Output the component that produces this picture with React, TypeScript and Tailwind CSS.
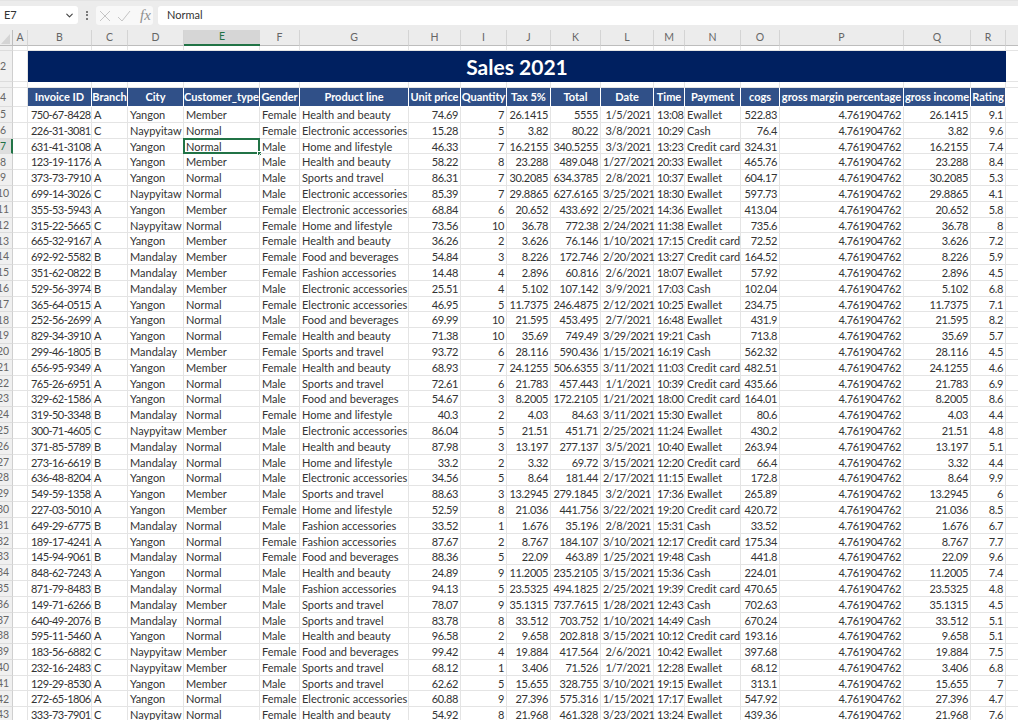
import { ChevronDown } from 'lucide-react';

const columns = [
  { key: 'A', width: 'w-[15px]' },
  { key: 'B', width: 'w-[64px]' },
  { key: 'C', width: 'w-[36px]' },
  { key: 'D', width: 'w-[56px]' },
  { key: 'E', width: 'w-[76px]' },
  { key: 'F', width: 'w-[40px]' },
  { key: 'G', width: 'w-[109px]' },
  { key: 'H', width: 'w-[52px]' },
  { key: 'I', width: 'w-[46px]' },
  { key: 'J', width: 'w-[44px]' },
  { key: 'K', width: 'w-[50px]' },
  { key: 'L', width: 'w-[53px]' },
  { key: 'M', width: 'w-[31px]' },
  { key: 'N', width: 'w-[56px]' },
  { key: 'O', width: 'w-[39px]' },
  { key: 'P', width: 'w-[124px]' },
  { key: 'Q', width: 'w-[67px]' },
  { key: 'R', width: 'w-[35px]' },
];

const headers = [
  'Invoice ID', 'Branch', 'City', 'Customer_type', 'Gender', 'Product line', 'Unit price', 'Quantity',
  'Tax 5%', 'Total', 'Date', 'Time', 'Payment', 'cogs', 'gross margin percentage', 'gross income', 'Rating',
];

// invoice|branch|city|type|gender|line|price|qty|tax|total|date|time|payment|cogs|income|rating
const raw = `750-67-8428|A|Yangon|Member|Female|Health and beauty|74.69|7|26.1415|5555|1/5/2021|13:08|Ewallet|522.83|26.1415|9.1
226-31-3081|C|Naypyitaw|Normal|Female|Electronic accessories|15.28|5|3.82|80.22|3/8/2021|10:29|Cash|76.4|3.82|9.6
631-41-3108|A|Yangon|Normal|Male|Home and lifestyle|46.33|7|16.2155|340.5255|3/3/2021|13:23|Credit card|324.31|16.2155|7.4
123-19-1176|A|Yangon|Member|Male|Health and beauty|58.22|8|23.288|489.048|1/27/2021|20:33|Ewallet|465.76|23.288|8.4
373-73-7910|A|Yangon|Normal|Male|Sports and travel|86.31|7|30.2085|634.3785|2/8/2021|10:37|Ewallet|604.17|30.2085|5.3
699-14-3026|C|Naypyitaw|Normal|Male|Electronic accessories|85.39|7|29.8865|627.6165|3/25/2021|18:30|Ewallet|597.73|29.8865|4.1
355-53-5943|A|Yangon|Member|Female|Electronic accessories|68.84|6|20.652|433.692|2/25/2021|14:36|Ewallet|413.04|20.652|5.8
315-22-5665|C|Naypyitaw|Normal|Female|Home and lifestyle|73.56|10|36.78|772.38|2/24/2021|11:38|Ewallet|735.6|36.78|8
665-32-9167|A|Yangon|Member|Female|Health and beauty|36.26|2|3.626|76.146|1/10/2021|17:15|Credit card|72.52|3.626|7.2
692-92-5582|B|Mandalay|Member|Female|Food and beverages|54.84|3|8.226|172.746|2/20/2021|13:27|Credit card|164.52|8.226|5.9
351-62-0822|B|Mandalay|Member|Female|Fashion accessories|14.48|4|2.896|60.816|2/6/2021|18:07|Ewallet|57.92|2.896|4.5
529-56-3974|B|Mandalay|Member|Male|Electronic accessories|25.51|4|5.102|107.142|3/9/2021|17:03|Cash|102.04|5.102|6.8
365-64-0515|A|Yangon|Normal|Female|Electronic accessories|46.95|5|11.7375|246.4875|2/12/2021|10:25|Ewallet|234.75|11.7375|7.1
252-56-2699|A|Yangon|Normal|Male|Food and beverages|69.99|10|21.595|453.495|2/7/2021|16:48|Ewallet|431.9|21.595|8.2
829-34-3910|A|Yangon|Normal|Female|Health and beauty|71.38|10|35.69|749.49|3/29/2021|19:21|Cash|713.8|35.69|5.7
299-46-1805|B|Mandalay|Member|Female|Sports and travel|93.72|6|28.116|590.436|1/15/2021|16:19|Cash|562.32|28.116|4.5
656-95-9349|A|Yangon|Member|Female|Health and beauty|68.93|7|24.1255|506.6355|3/11/2021|11:03|Credit card|482.51|24.1255|4.6
765-26-6951|A|Yangon|Normal|Male|Sports and travel|72.61|6|21.783|457.443|1/1/2021|10:39|Credit card|435.66|21.783|6.9
329-62-1586|A|Yangon|Normal|Male|Food and beverages|54.67|3|8.2005|172.2105|1/21/2021|18:00|Credit card|164.01|8.2005|8.6
319-50-3348|B|Mandalay|Normal|Female|Home and lifestyle|40.3|2|4.03|84.63|3/11/2021|15:30|Ewallet|80.6|4.03|4.4
300-71-4605|C|Naypyitaw|Member|Male|Electronic accessories|86.04|5|21.51|451.71|2/25/2021|11:24|Ewallet|430.2|21.51|4.8
371-85-5789|B|Mandalay|Normal|Male|Health and beauty|87.98|3|13.197|277.137|3/5/2021|10:40|Ewallet|263.94|13.197|5.1
273-16-6619|B|Mandalay|Normal|Male|Home and lifestyle|33.2|2|3.32|69.72|3/15/2021|12:20|Credit card|66.4|3.32|4.4
636-48-8204|A|Yangon|Normal|Male|Electronic accessories|34.56|5|8.64|181.44|2/17/2021|11:15|Ewallet|172.8|8.64|9.9
549-59-1358|A|Yangon|Member|Male|Sports and travel|88.63|3|13.2945|279.1845|3/2/2021|17:36|Ewallet|265.89|13.2945|6
227-03-5010|A|Yangon|Member|Female|Home and lifestyle|52.59|8|21.036|441.756|3/22/2021|19:20|Credit card|420.72|21.036|8.5
649-29-6775|B|Mandalay|Normal|Male|Fashion accessories|33.52|1|1.676|35.196|2/8/2021|15:31|Cash|33.52|1.676|6.7
189-17-4241|A|Yangon|Normal|Female|Fashion accessories|87.67|2|8.767|184.107|3/10/2021|12:17|Credit card|175.34|8.767|7.7
145-94-9061|B|Mandalay|Normal|Female|Food and beverages|88.36|5|22.09|463.89|1/25/2021|19:48|Cash|441.8|22.09|9.6
848-62-7243|A|Yangon|Normal|Male|Health and beauty|24.89|9|11.2005|235.2105|3/15/2021|15:36|Cash|224.01|11.2005|7.4
871-79-8483|B|Mandalay|Normal|Male|Fashion accessories|94.13|5|23.5325|494.1825|2/25/2021|19:39|Credit card|470.65|23.5325|4.8
149-71-6266|B|Mandalay|Member|Male|Sports and travel|78.07|9|35.1315|737.7615|1/28/2021|12:43|Cash|702.63|35.1315|4.5
640-49-2076|B|Mandalay|Normal|Male|Sports and travel|83.78|8|33.512|703.752|1/10/2021|14:49|Cash|670.24|33.512|5.1
595-11-5460|A|Yangon|Normal|Male|Health and beauty|96.58|2|9.658|202.818|3/15/2021|10:12|Credit card|193.16|9.658|5.1
183-56-6882|C|Naypyitaw|Member|Female|Food and beverages|99.42|4|19.884|417.564|2/6/2021|10:42|Ewallet|397.68|19.884|7.5
232-16-2483|C|Naypyitaw|Member|Female|Sports and travel|68.12|1|3.406|71.526|1/7/2021|12:28|Ewallet|68.12|3.406|6.8
129-29-8530|A|Yangon|Member|Male|Sports and travel|62.62|5|15.655|328.755|3/10/2021|19:15|Ewallet|313.1|15.655|7
272-65-1806|A|Yangon|Normal|Female|Electronic accessories|60.88|9|27.396|575.316|1/15/2021|17:17|Ewallet|547.92|27.396|4.7
333-73-7901|C|Naypyitaw|Normal|Female|Health and beauty|54.92|8|21.968|461.328|3/23/2021|13:24|Ewallet|439.36|21.968|7.6`;

const rows = raw.split('\n').map((line) => {
  const p = line.split('|');
  return [...p.slice(0, 14), '4.761904762', ...p.slice(14)];
});

// columns B..R that hold numbers
const rightAligned = [6, 7, 8, 9, 10, 13, 14, 15, 16];
// Lato's digits run wider than the sheet's, so tighten these
const digitColumns = [6, 7, 8, 9, 10, 11, 13, 14, 15, 16];

function cellClass(i: number) {
  if (i === 0) return 'text-left pl-[3px] pr-0 tracking-[-0.55px]';
  if (i === 11) return 'text-left pl-[3px] pr-0 tracking-[-0.35px]';
  const align = rightAligned.includes(i) ? 'text-right px-[2px]' : 'text-left px-[2px]';
  return digitColumns.includes(i) ? `${align} tracking-[-0.35px]` : align;
}

function RowNumber({ n, height, active }: { n: string; height: string; active?: boolean }) {
  return (
    <div
      className={`${height} w-[13px] shrink-0 overflow-hidden border-b border-[#dcdcdc] flex items-center ${
        active ? 'bg-[#dedede] text-[#1f7145] border-r-2 border-r-[#217346]' : 'bg-[#f0f0f0] text-[#666666] border-r border-r-[#cfcfcf]'
      }`}
    >
      {/* the window is cropped, the header really starts left of the picture */}
      <span className="w-[20px] -ml-[7px] shrink-0 text-center text-[10.5px] leading-none">{n}</span>
    </div>
  );
}

function BlankRow({ n, height }: { n: string; height: string }) {
  return (
    <div className="flex">
      <RowNumber n={n} height={height} />
      {columns.map((c) => (
        <div key={c.key} className={`${c.width} ${height} shrink-0 border-r border-b border-[#e4e4e4]`} />
      ))}
      <div className={`grow ${height} border-b border-[#e4e4e4]`} />
    </div>
  );
}

export default function App() {
  return (
    <div className="w-[1018px] h-[720px] overflow-hidden bg-white font-['Lato',sans-serif] text-[#333333]">
      {/* formula bar */}
      <div className="h-[30px] bg-[#ececec] flex items-start pt-[5px] border-t border-[#e4e4e4]">
        <div className="w-[78px] h-[18px] bg-white rounded-r-[3px] flex items-center justify-between pl-[4px] pr-[3px] text-[11px]">
          <span>E7</span>
          <ChevronDown size={11} strokeWidth={2.5} className="text-[#444444]" />
        </div>
        <div className="w-[18px] h-[18px] flex flex-col items-center justify-center gap-[1.5px]">
          <span className="size-[2px] bg-[#555555] rounded-full" />
          <span className="size-[2px] bg-[#555555] rounded-full" />
          <span className="size-[2px] bg-[#555555] rounded-full" />
        </div>
        <div className="w-[57px] h-[19px] bg-[#f8f8f8] rounded-[3px] flex items-center pl-[3px] text-[#c4c4c4]">
          <svg width="12" height="12" viewBox="0 0 12 12" fill="none" stroke="currentColor" strokeWidth="1">
            <path d="M1 1L11 11M11 1L1 11" />
          </svg>
          <svg width="14" height="12" viewBox="0 0 14 12" fill="none" stroke="currentColor" strokeWidth="1" className="ml-[6px]">
            <path d="M1 7L5 11L13 1" />
          </svg>
          <span className="ml-[9px] font-['Liberation_Serif',serif] italic text-[15px] leading-none text-[#8f8f8f]">fx</span>
        </div>
        <div className="ml-[5px] grow h-[19px] bg-white rounded-l-[3px] flex items-center pl-[9px] text-[11px]">
          Normal
        </div>
      </div>

      {/* column letters */}
      <div className="flex h-[16px] bg-[#ececec] text-[10.5px] text-[#666666]">
        <div className="w-[13px] shrink-0 border-b border-r border-[#bdbdbd] flex items-end justify-end">
          <svg width="9" height="10" viewBox="0 0 9 10" className="mb-[1px] mr-[2px]">
            <path d="M9 0V10H0Z" fill="#d4d4d4" />
          </svg>
        </div>
        {columns.map((c) => (
          <div
            key={c.key}
            className={`${c.width} shrink-0 flex items-center justify-center ${
              c.key === 'E'
                ? 'bg-[#d6d6d6] text-[#1f7145] border-b-2 border-[#217346]'
                : 'border-r border-b border-r-[#d4d4d4] border-b-[#bdbdbd]'
            }`}
          >
            {c.key}
          </div>
        ))}
        <div className="grow border-b border-[#bdbdbd]" />
      </div>

      <BlankRow n="" height="h-[5px]" />

      {/* title */}
      <div className="flex">
        <RowNumber n="2" height="h-[31px]" />
        <div className="w-[15px] h-[31px] shrink-0 border-r border-b border-[#e4e4e4]" />
        <div className="w-[978px] h-[31px] shrink-0 bg-[#002060] text-white font-bold text-[21px] flex items-center justify-center">
          Sales 2021
        </div>
        <div className="grow border-b border-[#e4e4e4]" />
      </div>

      <BlankRow n="" height="h-[6px]" />

      {/* table header */}
      <div className="flex">
        <RowNumber n="4" height="h-[19px]" />
        <div className="w-[15px] h-[19px] shrink-0 border-r border-b border-[#e4e4e4]" />
        {headers.map((h, i) => (
          <div
            key={h}
            className={`${columns[i + 1].width} h-[19px] shrink-0 overflow-hidden whitespace-nowrap bg-[#305088] border-r border-b border-white text-white font-bold text-[11px] flex items-center justify-center`}
          >
            {h}
          </div>
        ))}
      </div>

      {/* data */}
      {rows.map((row, r) => {
        const selectedRow = r === 2;
        return (
          <div key={row[0]} className="flex h-[15.8px]">
            <RowNumber n={String(r + 5)} height="h-[15.8px]" active={selectedRow} />
            <div className="w-[15px] shrink-0 border-r border-b border-[#e4e4e4]" />
            {row.map((cell, i) => (
              <div
                key={i}
                className={`${columns[i + 1].width} ${cellClass(i)} relative shrink-0 whitespace-nowrap border-r border-b border-[#e4e4e4] text-[11px] leading-[15px]`}
              >
                {cell}
                {selectedRow && i === 3 && (
                  <>
                    <span className="absolute -inset-px border-2 border-[#217346]" />
                    <span className="absolute -right-[3px] -bottom-[3px] size-[5px] bg-[#217346] border border-white" />
                  </>
                )}
              </div>
            ))}
            <div className="grow border-b border-[#e4e4e4]" />
          </div>
        );
      })}
    </div>
  );
}
